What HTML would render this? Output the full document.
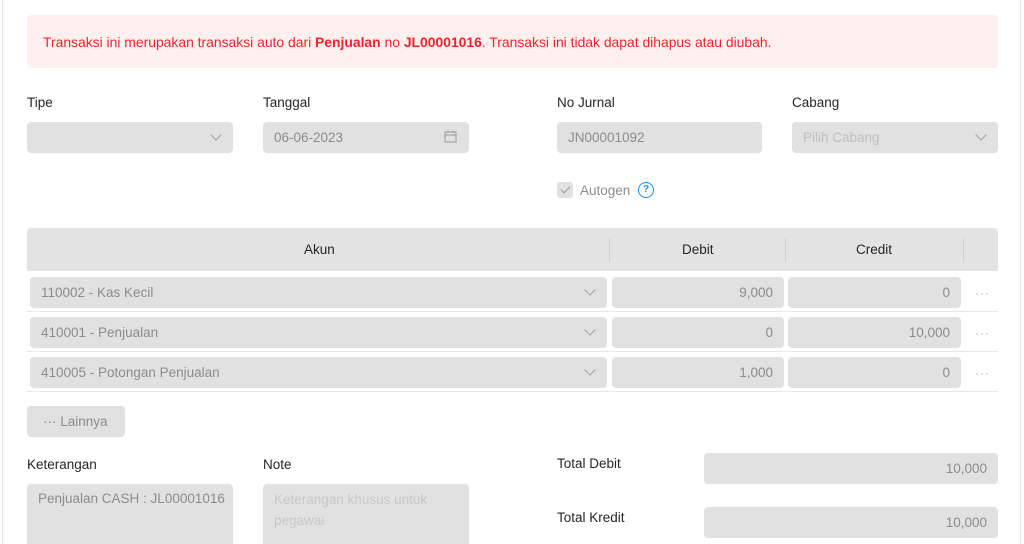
<!DOCTYPE html>
<html><head><meta charset="utf-8"><style>
*{box-sizing:border-box;margin:0;padding:0}
html,body{width:1024px;height:544px;overflow:hidden}
body{background:#fff;font-family:"Liberation Sans",sans-serif;position:relative;color:#262626}
.a{position:absolute}
.lbl{font-size:13.5px;color:#262626}
.inp{position:absolute;background:#e1e1e1;border-radius:4px;font-size:13.5px;color:#8c8c8c;line-height:31px;height:31px;padding:0 11px;white-space:nowrap}
.chev{position:absolute;width:8px;height:8px;border-right:1.2px solid #a0a0a0;border-bottom:1.2px solid #a0a0a0;transform:rotate(45deg)}
.r{text-align:right}
.dots{position:absolute;font-size:12px;color:#aaa;letter-spacing:1px}
.hl{position:absolute;left:27px;width:971px;height:1px;background:#e8e8e8}
</style></head><body>
<div class="a" style="left:2px;top:0;width:1px;height:544px;background:#e5e5e5"></div>
<div class="a" style="left:1020px;top:0;width:1px;height:544px;background:#e5e5e5"></div>
<div class="a" style="left:27px;top:15px;width:971px;height:53px;background:#fff0f0;border-radius:4px"></div>
<div class="a" style="left:43px;top:34px;font-size:13.9px;color:#f5222d;white-space:nowrap">Transaksi ini merupakan transaksi auto dari <b>Penjualan</b> no <b>JL00001016</b>. Transaksi ini tidak dapat dihapus atau diubah.</div>

<div class="a lbl" style="left:27px;top:95px">Tipe</div>
<div class="a lbl" style="left:263px;top:95px">Tanggal</div>
<div class="a lbl" style="left:557px;top:95px">No Jurnal</div>
<div class="a lbl" style="left:792px;top:95px">Cabang</div>

<div class="inp" style="left:27px;top:122px;width:206px"></div>
<div class="chev" style="left:212px;top:131px"></div>
<div class="inp" style="left:263px;top:122px;width:206px">06-06-2023</div>
<svg class="a" style="left:444px;top:130px" width="13" height="13" viewBox="0 0 13 13"><rect x="1" y="2" width="11" height="10" fill="none" stroke="#999" stroke-width="1"/><line x1="1" y1="5" x2="12" y2="5" stroke="#999"/><line x1="4" y1="0.5" x2="4" y2="3" stroke="#999"/><line x1="9" y1="0.5" x2="9" y2="3" stroke="#999"/></svg>
<div class="inp" style="left:557px;top:122px;width:205px">JN00001092</div>
<div class="inp" style="left:792px;top:122px;width:206px;color:#c0c0c0">Pilih Cabang</div>
<div class="chev" style="left:977px;top:131px"></div>

<div class="a" style="left:557px;top:182px;width:16px;height:16px;background:#e1e1e1;border-radius:3px"></div>
<div class="a" style="left:563px;top:184px;width:5px;height:9px;border-right:1.5px solid #999;border-bottom:1.5px solid #999;transform:rotate(45deg)"></div>
<div class="a" style="left:580px;top:183px;font-size:13.5px;color:#8c8c8c">Autogen</div>
<div class="a" style="left:638px;top:182px;width:16px;height:16px;border:1.3px solid #1890ff;border-radius:50%;color:#1890ff;font-size:10px;text-align:center;line-height:14px;font-weight:bold">?</div>

<div class="a" style="left:27px;top:228px;width:971px;height:43px;background:#e3e3e3;border-radius:4px 4px 0 0"></div>
<div class="a" style="left:609px;top:238px;width:1px;height:24px;background:#d0d0d0"></div>
<div class="a" style="left:785px;top:238px;width:1px;height:24px;background:#d0d0d0"></div>
<div class="a" style="left:963px;top:238px;width:1px;height:24px;background:#d0d0d0"></div>
<div class="a" style="left:304px;top:242px;font-size:13.5px">Akun</div>
<div class="a" style="left:682px;top:242px;font-size:13.5px">Debit</div>
<div class="a" style="left:856px;top:242px;font-size:13.5px">Credit</div>

<div class="inp" style="left:30px;top:277px;width:577px">110002 - Kas Kecil</div>
<div class="chev" style="left:586px;top:286px"></div>
<div class="inp r" style="left:612px;top:277px;width:172px">9,000</div>
<div class="inp r" style="left:788px;top:277px;width:173px">0</div>
<div class="dots" style="left:975px;top:286px">···</div>
<div class="hl" style="top:311px"></div>

<div class="inp" style="left:30px;top:317px;width:577px">410001 - Penjualan</div>
<div class="chev" style="left:586px;top:326px"></div>
<div class="inp r" style="left:612px;top:317px;width:172px">0</div>
<div class="inp r" style="left:788px;top:317px;width:173px">10,000</div>
<div class="dots" style="left:975px;top:326px">···</div>
<div class="hl" style="top:351px"></div>

<div class="inp" style="left:30px;top:357px;width:577px">410005 - Potongan Penjualan</div>
<div class="chev" style="left:586px;top:366px"></div>
<div class="inp r" style="left:612px;top:357px;width:172px">1,000</div>
<div class="inp r" style="left:788px;top:357px;width:173px">0</div>
<div class="dots" style="left:975px;top:366px">···</div>
<div class="hl" style="top:391px"></div>

<div class="inp" style="left:27px;top:406px;width:98px;padding:0 0 0 16px">··· Lainnya</div>

<div class="a lbl" style="left:27px;top:457px">Keterangan</div>
<div class="a lbl" style="left:263px;top:457px">Note</div>
<div class="inp" style="left:27px;top:484px;width:206px;height:60px;line-height:18px;padding-top:6px;border-radius:4px 4px 0 0">Penjualan CASH : JL00001016</div>
<div class="inp" style="left:263px;top:484px;width:206px;height:60px;line-height:21px;padding-top:5px;color:#c8c8c8;white-space:normal;border-radius:4px 4px 0 0">Keterangan khusus untuk pegawai</div>

<div class="a lbl" style="left:557px;top:456px">Total Debit</div>
<div class="inp r" style="left:704px;top:453px;width:294px">10,000</div>
<div class="a lbl" style="left:557px;top:510px">Total Kredit</div>
<div class="inp r" style="left:704px;top:507px;width:294px">10,000</div>
</body></html>
